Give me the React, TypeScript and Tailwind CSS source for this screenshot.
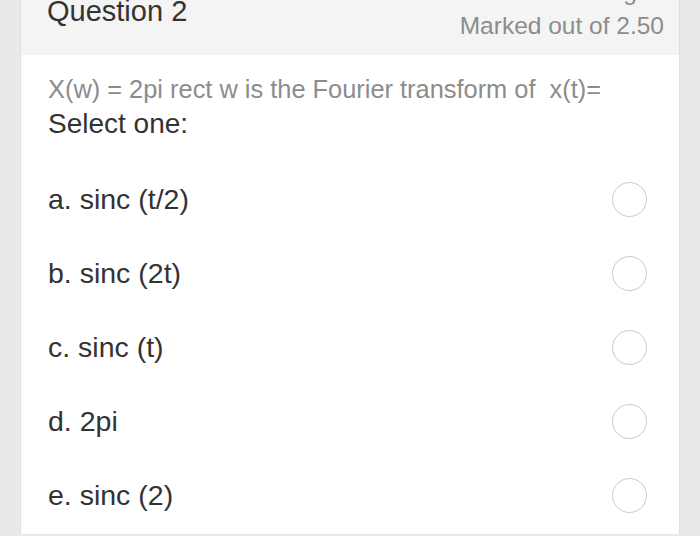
import React from "react";

const OPTIONS = ["a. sinc (t/2)", "b. sinc (2t)", "c. sinc (t)", "d. 2pi", "e. sinc (2)"];

function Radio() {
  return <span className="h-[35px] w-[35px] shrink-0 rounded-full border-[1.5px] border-[#c9c9c9] bg-white" />;
}

export default function App() {
  return (
    <div
      className="h-[536px] w-[700px] overflow-hidden bg-[#e9e9e9] px-[20px]"
      style={{ fontFamily: '"Liberation Sans", Arial, sans-serif' }}
    >
      <div className="h-[534px] border-x border-[#dddddd] bg-white">
        {/* Header, scrolled partly out of view */}
        <header className="flex h-[55px] items-start justify-between overflow-hidden bg-[#f4f4f4] pl-[26px] pr-[15px]">
          <h2 className="-mt-[6px] text-[29px] leading-[34px] text-[#333]">Question 2</h2>
          <div className="-mt-[25px] text-right text-[24.5px] leading-[34px] text-[#8c8c8c]">
            <div>Time remaining: 1</div>
            <div>Marked out of 2.50</div>
          </div>
        </header>

        <div className="pl-[27px] pr-[32px] pt-[17px]">
          <p className="whitespace-nowrap text-[25.4px] leading-[34px] text-[#8c8c8c]">
            X(w) = 2pi rect w is the Fourier transform of&nbsp; x(t)=
          </p>
          <p className="text-[28px] leading-[36px] text-[#333]">Select one:</p>

          <ul className="mt-[20px]">
            {OPTIONS.map((o) => (
              <li key={o} className="flex h-[74px] items-center justify-between">
                <span className="text-[28.5px] text-[#333]">{o}</span>
                <Radio />
              </li>
            ))}
          </ul>
        </div>
      </div>
    </div>
  );
}
